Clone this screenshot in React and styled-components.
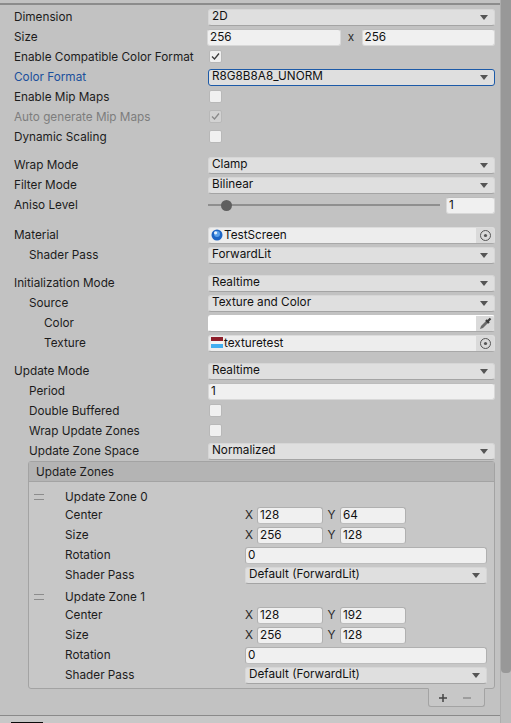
import React from "react"
import styled, { createGlobalStyle } from "styled-components"

const Global = createGlobalStyle`
  html, body { margin: 0; padding: 0; }
  body { width: 511px; height: 723px; overflow: hidden; background: #c2c2c2; font-family: Inter, "Liberation Sans", sans-serif; }
`;

const Window = styled.div`
  width: 511px;
  height: 723px;
  display: flex;
  overflow: hidden;
`;

const LeftColumn = styled.div`
  width: 500px;
  flex: none;
  display: flex;
  flex-direction: column;
`;

const Inspector = styled.div`
  height: 713px;
  margin-top: 3px;
  box-sizing: border-box;
  border-top: 2px solid #8c8c8c;
  border-bottom: 1px solid #8a8a8a;
  padding: 2px 5px 0 14px;
`;

const ScrollTrack = styled.div`
  flex: 1;
  border-left: 1px solid #adadad;
  background: #bdbdbd;
`;

const ScrollThumb = styled.div`
  height: 673px;
  background: #989898;
  border-radius: 0 0 4px 4px;
`;

const Footer = styled.div`
  flex: 1;
  background: #c8c8c8;
  padding-left: 11px;
`;

const BlackBar = styled.div`
  width: 32px;
  height: 1px;
  margin-top: 6px;
  background: #0c0c0c;
`;

const Row = styled.div`
  height: 20px;
  display: flex;
  align-items: center;
  padding-left: ${(p) => p.$indent || 0}px;
  margin-top: ${(p) => p.$gap || 0}px;
`;

const Label = styled.div`
  width: ${(p) => 194 - (p.$indent || 0)}px;
  flex: none;
  font-size: 11.75px;
  line-height: 17px;
  white-space: nowrap;
  color: ${(p) => (p.$focus ? "#1a4f9c" : p.$disabled ? "#7d7d7d" : "#1c1c1c")};
`;

const Field = styled.div`
  flex: 1;
  min-width: 0;
  display: flex;
  align-items: center;
  height: 17px;
`;

const Dropdown = styled.div`
  flex: 1;
  height: 17px;
  box-sizing: border-box;
  display: flex;
  align-items: center;
  justify-content: space-between;
  padding: 0 6px 0 3px;
  font-size: 11.75px;
  color: #111;
  background: #dfdfdf;
  border-radius: 3px;
  border: 1px solid ${(p) => (p.$focus ? "#1c5aa8" : "#d6d6d6")};
  border-bottom-color: ${(p) => (p.$focus ? "#1c5aa8" : "#a4a4a4")};
`;

const DropdownText = styled.span`
  margin-bottom: 2px;
`;

const Arrow = styled.span`
  width: 0;
  height: 0;
  border-left: 4px solid transparent;
  border-right: 4px solid transparent;
  border-top: 5px solid #555;
`;

const Input = styled.div`
  flex: ${(p) => (p.$w ? "none" : 1)};
  width: ${(p) => (p.$w ? `${p.$w}px` : "auto")};
  height: 17px;
  box-sizing: border-box;
  padding: 0 2px;
  display: flex;
  align-items: center;
  font-size: 11.75px;
  color: #111;
  background: #f0f0f0;
  border: 1px solid #d8d8d8;
  border-top-color: #bcbcbc;
  border-radius: 3px;
`;

const SizeInput = styled(Input)`
  margin-left: ${(p) => p.$pull || 0}px;
`;

const ZoneInput = styled(Input)`
  border-color: #b0b0b0;
  border-bottom-color: #bcbcbc;
`;

const AxisLabel = styled.span`
  width: ${(p) => p.$w}px;
  flex: none;
  text-align: ${(p) => p.$align || "center"};
  font-size: 11.75px;
  color: #2a2a2a;
`;

const Check = styled.div`
  width: 13px;
  height: 13px;
  margin: 0 0 2px 1px;
  box-sizing: border-box;
  background: ${(p) => (p.$disabled ? "#d2d2d2" : "#f0f0f0")};
  border: 1px solid #b8b8b8;
  border-radius: 2px;
  display: flex;
  align-items: center;
  justify-content: center;
`;

const SliderWrap = styled.div`
  flex: 1;
  height: 17px;
  position: relative;
  display: flex;
  align-items: center;
  margin-right: 6px;
`;

const SliderLine = styled.div`
  width: 100%;
  height: 2px;
  background: #8f8f8f;
`;

const SliderKnob = styled.div`
  position: absolute;
  left: 13px;
  top: 3px;
  width: 11px;
  height: 11px;
  border-radius: 50%;
  background: #5f5f5f;
`;

const ObjectField = styled.div`
  flex: 1;
  height: 17px;
  box-sizing: border-box;
  display: flex;
  align-items: center;
  background: #ededed;
  border: 1px solid #dcdcdc;
  border-bottom-color: #a8a8a8;
  border-radius: 3px;
  overflow: hidden;
  font-size: 11.75px;
  color: #111;
`;

const ObjectName = styled.span`
  flex: 1;
  display: flex;
  align-items: center;
  gap: 1px;
  padding-left: 2px;
`;

const SideButton = styled.div`
  width: 18px;
  align-self: stretch;
  display: flex;
  align-items: center;
  justify-content: center;
  background: #dadada;
`;

const ColorField = styled(ObjectField)`
  background: #fff;
  border-color: #c8c8c8;
  border-left-color: #fff;
  border-top-color: #fff;
  border-bottom-color: #a8a8a8;
`;

const Panel = styled.div`
  margin: 0 0 0 14px;
  height: 228px;
  box-sizing: border-box;
  border: 1px solid #a3a3a3;
  border-radius: 3px;
  background: #c7c7c7;
`;

const PanelHeader = styled.div`
  height: 20px;
  box-sizing: border-box;
  background: #b4b4b4;
  border-bottom: 1px solid #a3a3a3;
  padding: 2px 0 0 7px;
  font-size: 11.75px;
  line-height: 17px;
  color: #1c1c1c;
`;

const Zone = styled.div`
  position: relative;
  padding: 0 7px 0 36px;
  margin-top: ${(p) => p.$gap || 0}px;
`;

const DragHandle = styled.div`
  position: absolute;
  left: 5px;
  top: 6px;
  width: 10px;
  height: 4px;
  border-top: 1px solid #8c8c8c;
  border-bottom: 1px solid #8c8c8c;
`;

const ZoneTitle = styled.div`
  height: 17px;
  display: flex;
  align-items: center;
  font-size: 11.75px;
  color: #1c1c1c;
`;

const ZoneLabel = styled(Label)`
  width: 180px;
`;

const AddRemove = styled.div`
  width: 57px;
  height: 19px;
  margin: -1px 0 0 414px;
  position: relative;
  box-sizing: border-box;
  border: 1px solid #a3a3a3;
  border-top-color: #c7c7c7;
  border-radius: 0 0 3px 3px;
  background: #c7c7c7;
  padding-right: 3px;
  display: flex;
  align-items: center;
  justify-content: center;
  gap: 14px;
`;

const Tick = ({ color = "#3c3c3c" }) => (
  <svg width="11" height="11" viewBox="0 0 11 11">
    <path d="M2 5.5 L4.5 8 L9 2.5" fill="none" stroke={color} strokeWidth="1.3" />
  </svg>
);

const TargetIcon = () => (
  <svg width="13" height="13" viewBox="0 0 13 13">
    <circle cx="6.5" cy="6.5" r="5" fill="none" stroke="#555" strokeWidth="1" />
    <circle cx="6.5" cy="6.5" r="1.6" fill="#555" />
  </svg>
);

const PickerIcon = () => (
  <svg width="13" height="13" viewBox="0 0 13 13">
    <path d="M1 12 L2 9 L7.5 3.5 L9.5 5.5 L4 11 Z" fill="#6a6a6a" />
    <path d="M7 3 L10 6 M8.5 4.5 L11.5 1.5" stroke="#3c3c3c" strokeWidth="2.2" />
  </svg>
);

const SphereIcon = () => (
  <svg width="12" height="12" viewBox="0 0 12 12">
    <circle cx="6" cy="6" r="5.5" fill="#1c64c4" />
    <circle cx="6" cy="5" r="3" fill="#5aa0ea" />
    <circle cx="4.6" cy="3.8" r="1.6" fill="#e4f0fc" />
  </svg>
);

const TextureIcon = () => (
  <svg width="12" height="12" viewBox="0 0 12 12">
    <rect x="0" y="0" width="12" height="4" fill="#8e1f2b" />
    <rect x="0" y="4" width="12" height="3" fill="#f4f4f4" />
    <rect x="0" y="7" width="12" height="4" fill="#42aef0" />
  </svg>
);

const PlusMinus = ({ d, color }) => (
  <svg width="10" height="10" viewBox="0 0 10 10">
    <path d={d} stroke={color} strokeWidth="1.5" fill="none" />
  </svg>
);

const Select = ({ value, focus }) => (
  <Dropdown $focus={focus}>
    <DropdownText>{value}</DropdownText>
    <Arrow />
  </Dropdown>
);

const Prop = ({ label, indent, gap, focus, disabled, children }) => (
  <Row $indent={indent} $gap={gap}>
    <Label $indent={indent} $focus={focus} $disabled={disabled}>{label}</Label>
    <Field>{children}</Field>
  </Row>
);

const ZoneBlock = ({ index, centerY, gap }) => (
  <Zone $gap={gap}>
    <DragHandle />
    <ZoneTitle>Update Zone {index}</ZoneTitle>
    {[["Center", "128", centerY], ["Size", "256", "128"]].map(([label, x, y]) => (
      <Row key={label}>
        <ZoneLabel>{label}</ZoneLabel>
        <Field>
          <AxisLabel $w={12} $align="left">X</AxisLabel>
          <ZoneInput $w={66}>{x}</ZoneInput>
          <AxisLabel $w={17}>Y</AxisLabel>
          <ZoneInput $w={66}>{y}</ZoneInput>
        </Field>
      </Row>
    ))}
    <Row>
      <ZoneLabel>Rotation</ZoneLabel>
      <Field><ZoneInput>0</ZoneInput></Field>
    </Row>
    <Row>
      <ZoneLabel>Shader Pass</ZoneLabel>
      <Field><Select value="Default (ForwardLit)" /></Field>
    </Row>
  </Zone>
);

const App = () => {
  return (
    <Window>
      <Global />
      <LeftColumn>
        <Inspector>
          <Prop label="Dimension"><Select value="2D" /></Prop>
          <Prop label="Size">
            <SizeInput $pull={-1}>256</SizeInput>
            <AxisLabel $w={21}>x</AxisLabel>
            <SizeInput>256</SizeInput>
          </Prop>
          <Prop label="Enable Compatible Color Format"><Check><Tick /></Check></Prop>
          <Prop label="Color Format" focus><Select value="R8G8B8A8_UNORM" focus /></Prop>
          <Prop label="Enable Mip Maps"><Check /></Prop>
          <Prop label="Auto generate Mip Maps" disabled><Check $disabled><Tick color="#8a8a8a" /></Check></Prop>
          <Prop label="Dynamic Scaling"><Check /></Prop>

          <Prop label="Wrap Mode" gap={8}><Select value="Clamp" /></Prop>
          <Prop label="Filter Mode"><Select value="Bilinear" /></Prop>
          <Prop label="Aniso Level">
            <SliderWrap>
              <SliderLine />
              <SliderKnob />
            </SliderWrap>
            <Input $w={49}>1</Input>
          </Prop>

          <Prop label="Material" gap={10}>
            <ObjectField>
              <ObjectName><SphereIcon />TestScreen</ObjectName>
              <SideButton><TargetIcon /></SideButton>
            </ObjectField>
          </Prop>
          <Prop label="Shader Pass" indent={15}><Select value="ForwardLit" /></Prop>

          <Prop label="Initialization Mode" gap={8}><Select value="Realtime" /></Prop>
          <Prop label="Source" indent={15}><Select value="Texture and Color" /></Prop>
          <Prop label="Color" indent={30}>
            <ColorField>
              <ObjectName />
              <SideButton><PickerIcon /></SideButton>
            </ColorField>
          </Prop>
          <Prop label="Texture" indent={30}>
            <ObjectField>
              <ObjectName><TextureIcon />texturetest</ObjectName>
              <SideButton><TargetIcon /></SideButton>
            </ObjectField>
          </Prop>

          <Prop label="Update Mode" gap={8}><Select value="Realtime" /></Prop>
          <Prop label="Period" indent={15}><Input>1</Input></Prop>
          <Prop label="Double Buffered" indent={15}><Check /></Prop>
          <Prop label="Wrap Update Zones" indent={15}><Check /></Prop>
          <Prop label="Update Zone Space" indent={15}><Select value="Normalized" /></Prop>

          <Panel>
            <PanelHeader>Update Zones</PanelHeader>
            <ZoneBlock index={0} centerY="64" gap={6} />
            <ZoneBlock index={1} centerY="192" gap={3} />
          </Panel>
          <AddRemove>
            <PlusMinus d="M1 5 H9 M5 1 V9" color="#444" />
            <PlusMinus d="M1 5 H9" color="#8f8f8f" />
          </AddRemove>
        </Inspector>
        <Footer><BlackBar /></Footer>
      </LeftColumn>
      <ScrollTrack>
        <ScrollThumb />
      </ScrollTrack>
    </Window>
  )
}

export default App
